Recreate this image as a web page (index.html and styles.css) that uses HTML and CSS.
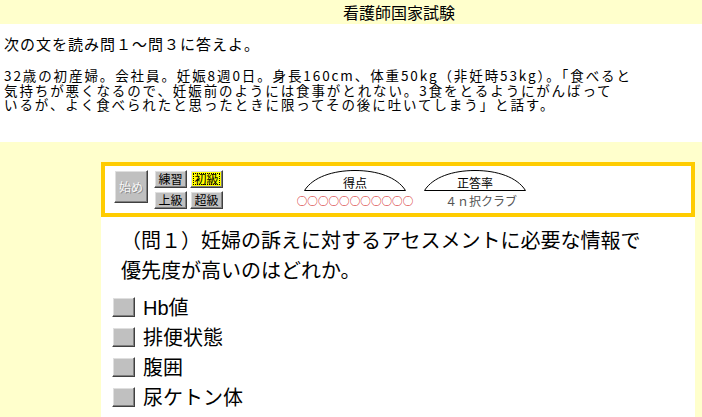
FILE: index.html
```html
<!DOCTYPE html>
<html lang="ja">
<head>
<meta charset="utf-8">
<title>看護師国家試験</title>
<link rel="stylesheet" href="styles.css">
</head>
<body>
<div class="header">看護師国家試験</div>
<div class="intro">
  <div class="lead">次の文を読み問１～問３に答えよ。</div>
  <div class="case">32歳の初産婦。会社員。妊娠8週0日。身長160cm、体重50kg（非妊時53kg）。「食べると<br>気持ちが悪くなるので、妊娠前のようには食事がとれない。3食をとるようにがんばって<br>いるが、よく食べられたと思ったときに限ってその後に吐いてしまう」と話す。</div>
</div>
<div class="panel">
  <div class="scorebox">
    <button class="btn btn-start" disabled>始め</button>
    <div class="levels">
      <button class="btn btn-level">練習</button>
      <button class="btn btn-level btn-active">初級</button>
      <button class="btn btn-level">上級</button>
      <button class="btn btn-level">超級</button>
    </div>
    <div class="stat stat-score">
      <div class="dome">
        <svg class="dome-arc" width="104" height="22" viewBox="0 0 104 22"><path d="M1.5 21.5 C 10 8, 30 1.5, 52 1.5 C 74 1.5, 94 8, 102.5 21.5 Z" fill="none" stroke="#000" stroke-width="1"/></svg>
        <span class="dome-label">得点</span>
      </div>
      <div class="marks">○○○○○○○○○○○</div>
    </div>
    <div class="stat stat-rate">
      <div class="dome">
        <svg class="dome-arc" width="104" height="22" viewBox="0 0 104 22"><path d="M1.5 21.5 C 10 8, 30 1.5, 52 1.5 C 74 1.5, 94 8, 102.5 21.5 Z" fill="none" stroke="#000" stroke-width="1"/></svg>
        <span class="dome-label">正答率</span>
      </div>
      <div class="club">４ｎ択クラブ</div>
    </div>
  </div>
  <div class="question">（問１）妊婦の訴えに対するアセスメントに必要な情報で<br>優先度が高いのはどれか。</div>
  <ul class="options">
    <li class="option"><span class="choice"></span><span class="option-text"><span class="latin">Hb</span>値</span></li>
    <li class="option"><span class="choice"></span><span class="option-text">排便状態</span></li>
    <li class="option"><span class="choice"></span><span class="option-text">腹囲</span></li>
    <li class="option"><span class="choice"></span><span class="option-text">尿ケトン体</span></li>
  </ul>
</div>
</body>
</html>
```
FILE: styles.css
```css
html, body {
  margin: 0;
  padding: 0;
}
body {
  background: #ffffcc;
  color: #000;
  font-family: "Noto Sans CJK JP", "Noto Sans", sans-serif;
  width: 702px;
  height: 417px;
  overflow: hidden;
}
.header {
  height: 24px;
  line-height: 24px;
  padding-left: 96px;
  text-align: center;
  font-size: 16px;
}
.intro {
  background: #fff;
  height: 118px;
  padding: 12px 4px 0;
  box-sizing: border-box;
}
.lead {
  font-size: 15px;
  letter-spacing: 1px;
  line-height: 16px;
  white-space: nowrap;
}
.case {
  margin-top: 16px;
  font-size: 13.5px;
  letter-spacing: 1.9px;
  line-height: 14.5px;
  white-space: nowrap;
}
.panel {
  margin: 20px 7px 0 101px;
  background: #fff;
  height: 255px;
}
.scorebox {
  height: 55px;
  box-sizing: border-box;
  border: 4px solid #ffcc00;
  display: flex;
  align-items: flex-start;
  padding: 4px 0 0 9px;
}
.btn {
  font-family: "Noto Sans CJK JP", sans-serif;
  font-size: 12px;
  line-height: 1;
  padding: 0;
  margin: 0;
  background: #c0c0c0;
  color: #000;
  border: 1px solid;
  border-color: #fff #404040 #404040 #fff;
  box-shadow: inset -1px -1px #808080, inset 1px 1px #dfdfdf;
  box-sizing: border-box;
}
.btn-start {
  width: 34px;
  height: 33px;
  color: #f6f6f6;
  text-shadow: 1px 1px 0 #8c8c8c;
}
.levels {
  margin-left: 6px;
  display: grid;
  grid-template-columns: 33px 33px;
  grid-template-rows: 18px 18px;
  gap: 3px;
}
.btn-active {
  background: #ffff00;
  outline: 1px dotted #000;
  outline-offset: -4px;
}
.stat {
  display: flex;
  flex-direction: column;
  align-items: center;
}
.stat-score {
  margin-left: 73px;
  width: 118px;
}
.stat-rate {
  margin-left: 9px;
  width: 104px;
}
.dome {
  display: grid;
  width: 104px;
  height: 22px;
  margin-top: -1px;
}
.dome-arc, .dome-label {
  grid-area: 1 / 1;
}
.dome-arc {
  display: block;
}
.dome-label {
  align-self: end;
  justify-self: center;
  font-size: 12px;
  line-height: 14px;
  padding-bottom: 1px;
}
.marks {
  margin-top: 3px;
  font-size: 10.6px;
  line-height: 14px;
  color: #d00000;
  white-space: nowrap;
}
.club {
  margin-top: 3px;
  font-size: 12px;
  line-height: 14px;
  color: #555;
  padding-left: 12px;
  white-space: nowrap;
}
.question {
  margin-top: 8px;
  padding-left: 20px;
  font-size: 20px;
  line-height: 30px;
  white-space: nowrap;
}
.options {
  list-style: none;
  margin: 7px 0 0;
  padding: 0;
}
.option {
  height: 30px;
  display: flex;
  align-items: center;
}
.choice {
  margin-left: 11px;
  width: 23px;
  height: 20px;
  box-sizing: border-box;
  background: #c0c0c0;
  border: 1px solid;
  border-color: #fff #404040 #404040 #fff;
  box-shadow: inset -1px -1px #808080, inset 1px 1px #dfdfdf;
}
.option-text {
  margin-left: 8px;
  font-size: 20px;
  line-height: 30px;
}
.latin {
  font-family: "Liberation Sans", Arial, sans-serif;
}
```
